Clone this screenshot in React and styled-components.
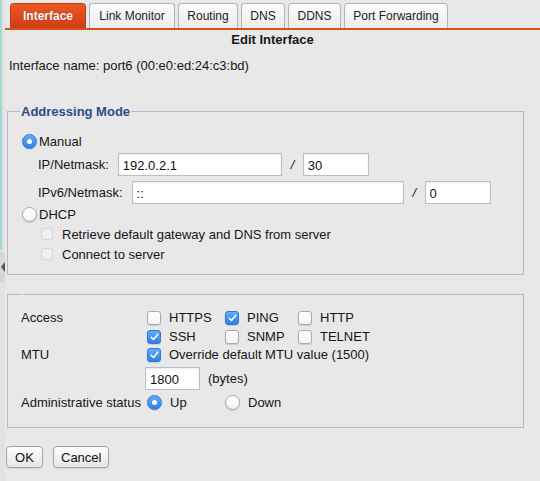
import React from "react";
import styled, { createGlobalStyle } from "styled-components";

const GlobalStyle = createGlobalStyle`
  html, body {
    margin: 0;
    padding: 0;
    background: #e8e8e8;
  }
  body {
    font-family: "Liberation Sans", Arial, sans-serif;
    font-size: 13px;
    color: #161616;
  }
`;

const tabs = [
  { label: "Interface", w: 76, active: true },
  { label: "Link Monitor", w: 86 },
  { label: "Routing", w: 60 },
  { label: "DNS", w: 44 },
  { label: "DDNS", w: 53 },
  { label: "Port Forwarding", w: 104 },
];

const CheckMark = () => (
  <svg width="9" height="8" viewBox="0 0 9 8">
    <path d="M1.2 4.3 L3.5 6.5 L7.8 1.3" fill="none" stroke="#fff" strokeWidth="1.5" strokeLinecap="round" strokeLinejoin="round" />
  </svg>
);

const Checkbox = ({ checked, disabled }) => (
  <CheckBox $checked={checked} $disabled={disabled}>
    {checked && <CheckMark />}
  </CheckBox>
);

const Radio = ({ checked }) => (
  <RadioDot $checked={checked}>{checked && <RadioInner />}</RadioDot>
);

const App = () => {
  return (
    <>
      <GlobalStyle />
      <Page>
        <Strip>
          <TealEdge />
          <Handle>
            <Arrow />
          </Handle>
        </Strip>
        <Main>
          <TabBar>
            {tabs.map((t) => (
              <Tab key={t.label} $active={t.active} $w={t.w}>
                {t.label}
              </Tab>
            ))}
          </TabBar>
          <Title>Edit Interface</Title>
          <NameLine>Interface name: port6 (00:e0:ed:24:c3:bd)</NameLine>

          <FieldSet>
            <Legend>Addressing Mode</Legend>
            <Stack>
              <OptionRow $h={20}>
                <Radio checked />
                <span>Manual</span>
              </OptionRow>
              <FieldRow $top={2}>
                <span>IP/Netmask:</span>
                <TextBox $w={164} defaultValue="192.0.2.1" />
                <Slash>/</Slash>
                <TextBox $w={66} defaultValue="30" />
              </FieldRow>
              <FieldRow $top={5}>
                <span>IPv6/Netmask:</span>
                <TextBox $w={272} defaultValue="::" />
                <Slash>/</Slash>
                <TextBox $w={66} defaultValue="0" />
              </FieldRow>
              <OptionRow $h={20}>
                <Radio />
                <span>DHCP</span>
              </OptionRow>
              <SubRow>
                <Checkbox disabled />
                <span>Retrieve default gateway and DNS from server</span>
              </SubRow>
              <SubRow>
                <Checkbox disabled />
                <span>Connect to server</span>
              </SubRow>
            </Stack>
          </FieldSet>

          <FieldSet $second>
            <Legend />
            <AccessGrid>
              <Label>Access</Label>
              <Choice>
                <Checkbox />
                <span>HTTPS</span>
              </Choice>
              <Choice>
                <Checkbox checked />
                <span>PING</span>
              </Choice>
              <Choice>
                <Checkbox />
                <span>HTTP</span>
              </Choice>

              <Label />
              <Choice>
                <Checkbox checked />
                <span>SSH</span>
              </Choice>
              <Choice>
                <Checkbox />
                <span>SNMP</span>
              </Choice>
              <Choice>
                <Checkbox />
                <span>TELNET</span>
              </Choice>

              <Label>MTU</Label>
              <Choice $span={3}>
                <Checkbox checked />
                <span>Override default MTU value (1500)</span>
              </Choice>

              <Label />
              <InputCell>
                <TextBox $w={55} defaultValue="1800" />
                <span>(bytes)</span>
              </InputCell>

              <Label>Administrative status</Label>
              <Choice>
                <Radio checked />
                <span>Up</span>
              </Choice>
              <Choice $span={2}>
                <Radio />
                <span>Down</span>
              </Choice>
            </AccessGrid>
          </FieldSet>

          <Buttons>
            <Button>OK</Button>
            <Button>Cancel</Button>
          </Buttons>
        </Main>
      </Page>
    </>
  );
};

export default App;

const Page = styled.div`
  display: flex;
  min-height: 481px;
`;

const Strip = styled.div`
  width: 5px;
  flex-shrink: 0;
  background: #e2e2e2;
  display: flex;
  flex-direction: column;
`;

const TealEdge = styled.div`
  width: 2px;
  height: 250px;
  background: #a3d8d5;
`;

const Handle = styled.div`
  width: 5px;
  height: 30px;
  margin-top: 2px;
  background: #d6d6d6;
  border-radius: 0 3px 3px 0;
  display: flex;
  align-items: center;
  justify-content: center;
`;

const Arrow = styled.div`
  width: 0;
  height: 0;
  border-top: 5px solid transparent;
  border-bottom: 5px solid transparent;
  border-right: 4px solid #555;
`;

const Main = styled.div`
  flex: 1;
  display: flex;
  flex-direction: column;
`;

const TabBar = styled.div`
  display: flex;
  gap: 3px;
  padding: 3px 0 0 5px;
  border-bottom: 2px solid #d6531c;
`;

const Tab = styled.div`
  width: ${(p) => p.$w}px;
  height: 25px;
  box-sizing: border-box;
  display: flex;
  align-items: center;
  justify-content: center;
  font-size: 12px;
  border-radius: 4px 4px 0 0;
  border: 1px solid ${(p) => (p.$active ? "#c23a12" : "#b3b3b3")};
  border-bottom: none;
  background: ${(p) =>
    p.$active
      ? "linear-gradient(#ea5a26, #cf3e14)"
      : "linear-gradient(#fbfbfb, #ececec)"};
  color: ${(p) => (p.$active ? "#fff" : "#222")};
  font-weight: ${(p) => (p.$active ? "bold" : "normal")};
  text-shadow: ${(p) => (p.$active ? "0 0 1px #7a1d05" : "none")};
`;

const Title = styled.div`
  text-align: center;
  font-weight: bold;
  margin-top: 2px;
  line-height: 15px;
`;

const NameLine = styled.div`
  margin: 11px 0 0 4px;
  line-height: 15px;
`;

const FieldSet = styled.fieldset`
  margin: ${(p) => (p.$second ? "19px" : "31px")} 16px 0 2px;
  padding: ${(p) => (p.$second ? "13px 12px 13px 13px" : "12px 12px 10px 12px")};
  border: 1px solid #b6b9cc;
  min-width: 0;
`;

const Legend = styled.legend`
  padding: 0 1px;
  font-weight: bold;
  color: #2a4c8d;
  line-height: 15px;
`;

const Stack = styled.div`
  display: flex;
  flex-direction: column;
`;

const OptionRow = styled.div`
  height: ${(p) => p.$h}px;
  display: flex;
  align-items: center;
  gap: 2px;
  padding-left: 2px;
`;

const FieldRow = styled.div`
  display: flex;
  align-items: center;
  gap: 9px;
  padding-left: 18px;
  margin-top: ${(p) => p.$top}px;
`;

const Slash = styled.span`
  font-style: italic;
  width: 3px;
`;

const TextBox = styled.input`
  width: ${(p) => p.$w}px;
  height: 23px;
  box-sizing: border-box;
  border: 1px solid #b9bdcc;
  background: #fff;
  box-shadow: inset 0 1px 2px rgba(0, 0, 0, 0.08);
  padding: 2px 4px 0;
  font-family: inherit;
  font-size: 13px;
  color: #111;
  outline: none;
`;

const SubRow = styled.div`
  height: 20px;
  display: flex;
  align-items: center;
  gap: 9px;
  padding-left: 21px;
`;

const CheckBox = styled.span`
  width: ${(p) => (p.$disabled ? 12 : 14)}px;
  height: ${(p) => (p.$disabled ? 12 : 14)}px;
  box-sizing: border-box;
  flex-shrink: 0;
  border-radius: 3px;
  display: inline-flex;
  align-items: center;
  justify-content: center;
  border: 1px solid
    ${(p) => (p.$checked ? "#2d78d8" : p.$disabled ? "#d6d6d6" : "#a9a9a9")};
  background: ${(p) =>
    p.$checked
      ? "linear-gradient(#62aef7, #2f80e2)"
      : p.$disabled
      ? "#efefef"
      : "linear-gradient(#fff, #f4f4f4)"};
  box-shadow: ${(p) => (p.$disabled ? "none" : "0 1px 1px rgba(0,0,0,0.12)")};
`;

const RadioDot = styled.span`
  width: 15px;
  height: 15px;
  box-sizing: border-box;
  flex-shrink: 0;
  border-radius: 50%;
  display: inline-flex;
  align-items: center;
  justify-content: center;
  border: 1px solid ${(p) => (p.$checked ? "#2d78d8" : "#a5a5a5")};
  background: ${(p) =>
    p.$checked ? "linear-gradient(#62aef7, #2f80e2)" : "linear-gradient(#fff, #f3f3f3)"};
  box-shadow: 0 1px 1px rgba(0, 0, 0, 0.12);
`;

const RadioInner = styled.span`
  width: 5px;
  height: 5px;
  border-radius: 50%;
  background: #fff;
`;

const AccessGrid = styled.div`
  display: grid;
  grid-template-columns: 126px 78px 73px 1fr;
  grid-template-rows: 19px 19px 17px 27px 24px;
  align-items: center;
`;

const Label = styled.div``;

const Choice = styled.div`
  grid-column: span ${(p) => p.$span || 1};
  display: flex;
  align-items: center;
  gap: 8px;
  white-space: nowrap;
`;

const InputCell = styled.div`
  grid-column: span 3;
  display: flex;
  align-items: center;
  gap: 8px;
  margin-left: -2px;
  height: 23px;
  align-self: end;
`;

const Buttons = styled.div`
  display: flex;
  gap: 10px;
  margin: 18px 0 0 1px;
`;

const Button = styled.button`
  min-width: 37px;
  height: 22px;
  padding: 0 7px;
  box-sizing: border-box;
  border: 1px solid #a2a2a2;
  border-radius: 4px;
  background: linear-gradient(#fdfdfd, #e6e6e6);
  font-family: inherit;
  font-size: 13px;
  color: #111;
  box-shadow: 0 1px 1px rgba(0, 0, 0, 0.08);
`;
